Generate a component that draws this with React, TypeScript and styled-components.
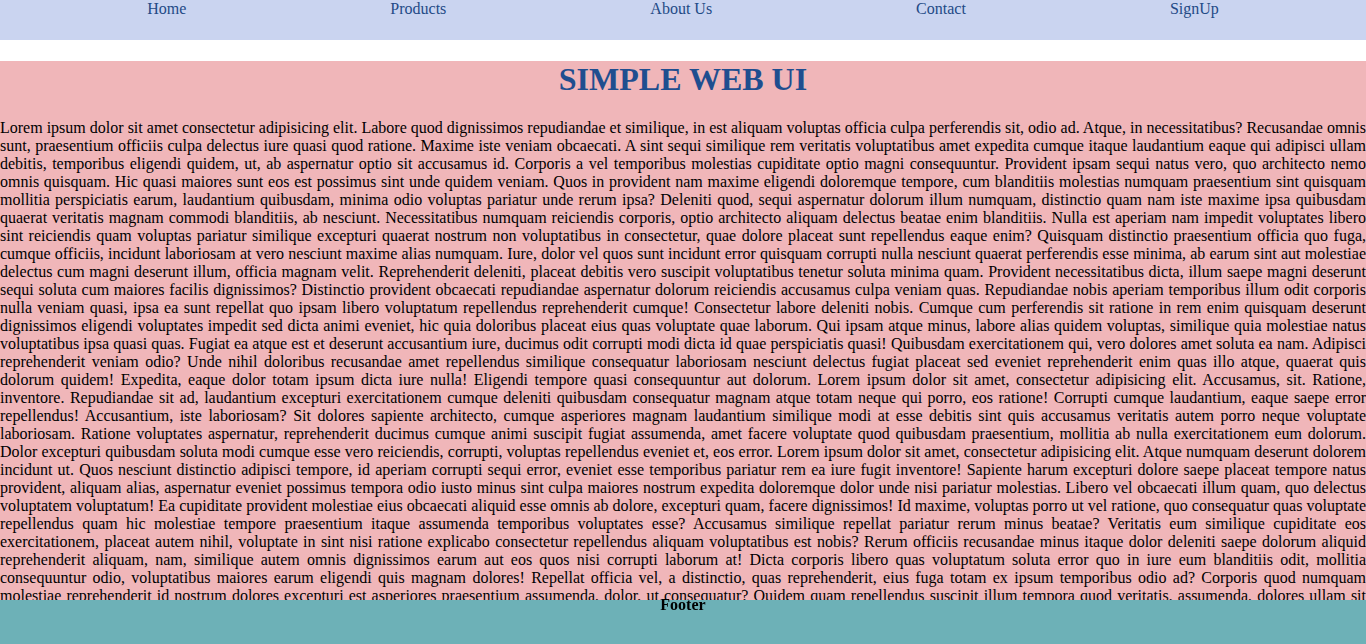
import React from 'react';
import styled, { createGlobalStyle } from 'styled-components';

const GlobalStyle = createGlobalStyle`
  body {
    margin: 0;
    font-family: "Liberation Serif", "Times New Roman", serif;
    font-size: 16px;
    background-color: #ffffff;
    color: #000000;
  }
`;

const StyledNav = styled.nav`
  height: 40px;
  background-color: #cad4f0;
`;

const StyledUl = styled.ul`
  margin: 0;
  padding: 0;
  list-style: none;
  display: flex;
  justify-content: center;
  gap: 204px;
`;

const StyledLi = styled.li`
  text-align: center;
`;

const NavLink = styled.a`
  color: #234a86;
  text-decoration: none;
`;

const StyledMain = styled.main`
  background-color: #f0b6b9;
  padding-bottom: 44px;
`;

const Title = styled.h1`
  margin: 21px 0 0 0;
  font-size: 32px;
  font-weight: bold;
  text-align: center;
  color: #1f4e8f;
`;

const Paragraph = styled.p`
  margin: 21px 0 0 0;
  text-align: justify;
`;

const StyledFooter = styled.footer`
  position: fixed;
  left: 0;
  right: 0;
  bottom: 0;
  height: 44px;
  background-color: #6db1b7;
  text-align: center;
  font-weight: bold;
  line-height: 10px;
`;

const links = ['Home', 'Products', 'About Us', 'Contact', 'SignUp'];

const loremText =
  'Lorem ipsum dolor sit amet consectetur adipisicing elit. Labore quod dignissimos repudiandae et similique, in est aliquam voluptas officia culpa perferendis sit, odio ad. Atque, in necessitatibus? Recusandae omnis ' +
  'sunt, praesentium officiis culpa delectus iure quasi quod ratione. Maxime iste veniam obcaecati. A sint sequi similique rem veritatis voluptatibus amet expedita cumque itaque laudantium eaque qui adipisci ullam ' +
  'debitis, temporibus eligendi quidem, ut, ab aspernatur optio sit accusamus id. Corporis a vel temporibus molestias cupiditate optio magni consequuntur. Provident ipsam sequi natus vero, quo architecto nemo ' +
  'omnis quisquam. Hic quasi maiores sunt eos est possimus sint unde quidem veniam. Quos in provident nam maxime eligendi doloremque tempore, cum blanditiis molestias numquam praesentium sint quisquam ' +
  'mollitia perspiciatis earum, laudantium quibusdam, minima odio voluptas pariatur unde rerum ipsa? Deleniti quod, sequi aspernatur dolorum illum numquam, distinctio quam nam iste maxime ipsa quibusdam ' +
  'quaerat veritatis magnam commodi blanditiis, ab nesciunt. Necessitatibus numquam reiciendis corporis, optio architecto aliquam delectus beatae enim blanditiis. Nulla est aperiam nam impedit voluptates libero ' +
  'sint reiciendis quam voluptas pariatur similique excepturi quaerat nostrum non voluptatibus in consectetur, quae dolore placeat sunt repellendus eaque enim? Quisquam distinctio praesentium officia quo fuga, ' +
  'cumque officiis, incidunt laboriosam at vero nesciunt maxime alias numquam. Iure, dolor vel quos sunt incidunt error quisquam corrupti nulla nesciunt quaerat perferendis esse minima, ab earum sint aut molestiae ' +
  'delectus cum magni deserunt illum, officia magnam velit. Reprehenderit deleniti, placeat debitis vero suscipit voluptatibus tenetur soluta minima quam. Provident necessitatibus dicta, illum saepe magni deserunt ' +
  'sequi soluta cum maiores facilis dignissimos? Distinctio provident obcaecati repudiandae aspernatur dolorum reiciendis accusamus culpa veniam quas. Repudiandae nobis aperiam temporibus illum odit corporis ' +
  'nulla veniam quasi, ipsa ea sunt repellat quo ipsam libero voluptatum repellendus reprehenderit cumque! Consectetur labore deleniti nobis. Cumque cum perferendis sit ratione in rem enim quisquam deserunt ' +
  'dignissimos eligendi voluptates impedit sed dicta animi eveniet, hic quia doloribus placeat eius quas voluptate quae laborum. Qui ipsam atque minus, labore alias quidem voluptas, similique quia molestiae natus ' +
  'voluptatibus ipsa quasi quas. Fugiat ea atque est et deserunt accusantium iure, ducimus odit corrupti modi dicta id quae perspiciatis quasi! Quibusdam exercitationem qui, vero dolores amet soluta ea nam. Adipisci ' +
  'reprehenderit veniam odio? Unde nihil doloribus recusandae amet repellendus similique consequatur laboriosam nesciunt delectus fugiat placeat sed eveniet reprehenderit enim quas illo atque, quaerat quis ' +
  'dolorum quidem! Expedita, eaque dolor totam ipsum dicta iure nulla! Eligendi tempore quasi consequuntur aut dolorum. Lorem ipsum dolor sit amet, consectetur adipisicing elit. Accusamus, sit. Ratione, ' +
  'inventore. Repudiandae sit ad, laudantium excepturi exercitationem cumque deleniti quibusdam consequatur magnam atque totam neque qui porro, eos ratione! Corrupti cumque laudantium, eaque saepe error ' +
  'repellendus! Accusantium, iste laboriosam? Sit dolores sapiente architecto, cumque asperiores magnam laudantium similique modi at esse debitis sint quis accusamus veritatis autem porro neque voluptate ' +
  'laboriosam. Ratione voluptates aspernatur, reprehenderit ducimus cumque animi suscipit fugiat assumenda, amet facere voluptate quod quibusdam praesentium, mollitia ab nulla exercitationem eum dolorum. ' +
  'Dolor excepturi quibusdam soluta modi cumque esse vero reiciendis, corrupti, voluptas repellendus eveniet et, eos error. Lorem ipsum dolor sit amet, consectetur adipisicing elit. Atque numquam deserunt dolorem ' +
  'incidunt ut. Quos nesciunt distinctio adipisci tempore, id aperiam corrupti sequi error, eveniet esse temporibus pariatur rem ea iure fugit inventore! Sapiente harum excepturi dolore saepe placeat tempore natus ' +
  'provident, aliquam alias, aspernatur eveniet possimus tempora odio iusto minus sint culpa maiores nostrum expedita doloremque dolor unde nisi pariatur molestias. Libero vel obcaecati illum quam, quo delectus ' +
  'voluptatem voluptatum! Ea cupiditate provident molestiae eius obcaecati aliquid esse omnis ab dolore, excepturi quam, facere dignissimos! Id maxime, voluptas porro ut vel ratione, quo consequatur quas voluptate ' +
  'repellendus quam hic molestiae tempore praesentium itaque assumenda temporibus voluptates esse? Accusamus similique repellat pariatur rerum minus beatae? Veritatis eum similique cupiditate eos ' +
  'exercitationem, placeat autem nihil, voluptate in sint nisi ratione explicabo consectetur repellendus aliquam voluptatibus est nobis? Rerum officiis recusandae minus itaque dolor deleniti saepe dolorum aliquid ' +
  'reprehenderit aliquam, nam, similique autem omnis dignissimos earum aut eos quos nisi corrupti laborum at! Dicta corporis libero quas voluptatum soluta error quo in iure eum blanditiis odit, mollitia ' +
  'consequuntur odio, voluptatibus maiores earum eligendi quis magnam dolores! Repellat officia vel, a distinctio, quas reprehenderit, eius fuga totam ex ipsum temporibus odio ad? Corporis quod numquam ' +
  'molestiae reprehenderit id nostrum dolores excepturi est asperiores praesentium assumenda, dolor, ut consequatur? Quidem quam repellendus suscipit illum tempora quod veritatis, assumenda, dolores ullam sit ' +
  'amet quasi nesciunt, eveniet explicabo magni. Nemo, voluptatibus. Delectus, dolorum fugit!';

const App: React.FC = () => {
  return (
    <>
      <GlobalStyle />
      <StyledNav>
        <StyledUl>
          {links.map((link) => (
            <StyledLi key={link}>
              <NavLink href="#">{link}</NavLink>
            </StyledLi>
          ))}
        </StyledUl>
      </StyledNav>
      <StyledMain>
        <Title>SIMPLE WEB UI</Title>
        <Paragraph>{loremText}</Paragraph>
      </StyledMain>
      <StyledFooter>Footer</StyledFooter>
    </>
  );
};

export default App;
